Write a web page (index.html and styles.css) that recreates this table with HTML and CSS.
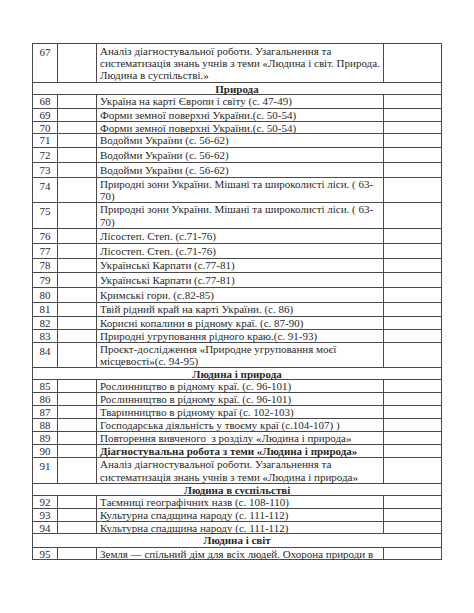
FILE: index.html
```html
<!DOCTYPE html>
<html lang="uk">
<head>
<meta charset="utf-8">
<title>Таблиця</title>
<link rel="stylesheet" href="styles.css">
</head>
<body>
<div class="tbl">
  <div class="row h38 multi"><div class="c n">67</div><div class="c e"></div><div class="c t">Аналіз діагностувальної роботи. Узагальнення та систематизація знань учнів з теми «Людина і світ. Природа. Людина в суспільстві.»</div><div class="c e"></div></div>
  <div class="row hdr h12"><div class="c h">Природа</div></div>
  <div class="row h14"><div class="c n">68</div><div class="c e"></div><div class="c t">Україна на карті Європи і світу (с. 47-49)</div><div class="c e"></div></div>
  <div class="row h13"><div class="c n">69</div><div class="c e"></div><div class="c t">Форми земної поверхні України.(с. 50-54)</div><div class="c e"></div></div>
  <div class="row h12"><div class="c n">70</div><div class="c e"></div><div class="c t">Форми земної поверхні України.(с. 50-54)</div><div class="c e"></div></div>
  <div class="row h14"><div class="c n">71</div><div class="c e"></div><div class="c t">Водойми України (с. 56-62)</div><div class="c e"></div></div>
  <div class="row h15"><div class="c n">72</div><div class="c e"></div><div class="c t">Водойми України (с. 56-62)</div><div class="c e"></div></div>
  <div class="row h15"><div class="c n">73</div><div class="c e"></div><div class="c t">Водойми України (с. 56-62)</div><div class="c e"></div></div>
  <div class="row h25 multi"><div class="c n">74</div><div class="c e"></div><div class="c t">Природні зони України. Мішані та широколисті ліси. ( 63-70)</div><div class="c e"></div></div>
  <div class="row h26 multi"><div class="c n">75</div><div class="c e"></div><div class="c t">Природні зони України. Мішані та широколисті ліси. ( 63-70)</div><div class="c e"></div></div>
  <div class="row h15"><div class="c n">76</div><div class="c e"></div><div class="c t">Лісостеп. Степ. (с.71-76)</div><div class="c e"></div></div>
  <div class="row h15"><div class="c n">77</div><div class="c e"></div><div class="c t">Лісостеп. Степ. (с.71-76)</div><div class="c e"></div></div>
  <div class="row h14"><div class="c n">78</div><div class="c e"></div><div class="c t">Українські Карпати (с.77-81)</div><div class="c e"></div></div>
  <div class="row h15"><div class="c n">79</div><div class="c e"></div><div class="c t">Українські Карпати (с.77-81)</div><div class="c e"></div></div>
  <div class="row h15"><div class="c n">80</div><div class="c e"></div><div class="c t">Кримські гори. (с.82-85)</div><div class="c e"></div></div>
  <div class="row h14"><div class="c n">81</div><div class="c e"></div><div class="c t">Твій рідний край на карті України. (с. 86)</div><div class="c e"></div></div>
  <div class="row h13"><div class="c n">82</div><div class="c e"></div><div class="c t">Корисні копалини в рідному краї. (с. 87-90)</div><div class="c e"></div></div>
  <div class="row h13"><div class="c n">83</div><div class="c e"></div><div class="c t">Природні угруповання рідного краю.(с. 91-93)</div><div class="c e"></div></div>
  <div class="row h25 multi"><div class="c n">84</div><div class="c e"></div><div class="c t">Проєкт-дослідження «Природне угруповання моєї місцевості»(с. 94-95)</div><div class="c e"></div></div>
  <div class="row hdr h12"><div class="c h">Людина і природа</div></div>
  <div class="row h13"><div class="c n">85</div><div class="c e"></div><div class="c t">Рослинництво в рідному краї. (с. 96-101)</div><div class="c e"></div></div>
  <div class="row h13"><div class="c n">86</div><div class="c e"></div><div class="c t">Рослинництво в рідному краї. (с. 96-101)</div><div class="c e"></div></div>
  <div class="row h13"><div class="c n">87</div><div class="c e"></div><div class="c t">Тваринництво в рідному краї (с. 102-103)</div><div class="c e"></div></div>
  <div class="row h13"><div class="c n">88</div><div class="c e"></div><div class="c t">Господарська діяльність у твоєму краї (с.104-107) )</div><div class="c e"></div></div>
  <div class="row h13"><div class="c n">89</div><div class="c e"></div><div class="c t">Повторення вивченого &nbsp;з розділу «Людина і природа»</div><div class="c e"></div></div>
  <div class="row h13"><div class="c n">90</div><div class="c e"></div><div class="c t b">Діагностувальна робота з теми «Людина і природа»</div><div class="c e"></div></div>
  <div class="row h26 multi"><div class="c n">91</div><div class="c e"></div><div class="c t">Аналіз діагностувальної роботи. Узагальнення та систематизація знань учнів з теми «Людина і природа»</div><div class="c e"></div></div>
  <div class="row hdr h12"><div class="c h">Людина в суспільстві</div></div>
  <div class="row h13"><div class="c n">92</div><div class="c e"></div><div class="c t">Таємниці географічних назв (с. 108-110)</div><div class="c e"></div></div>
  <div class="row h13"><div class="c n">93</div><div class="c e"></div><div class="c t">Культурна спадщина народу (с. 111-112)</div><div class="c e"></div></div>
  <div class="row h12"><div class="c n">94</div><div class="c e"></div><div class="c t">Культурна спадщина народу (с. 111-112)</div><div class="c e"></div></div>
  <div class="row hdr h14"><div class="c h">Людина і світ</div></div>
  <div class="row h12"><div class="c n">95</div><div class="c e"></div><div class="c t">Земля — спільний дім для всіх людей. Охорона природи в</div><div class="c e"></div></div>
</div>
</body>
</html>
```

FILE: styles.css
```css
html, body {
  margin: 0;
  padding: 0;
  background: #ffffff;
}
body {
  font-family: "Liberation Serif", "Times New Roman", serif;
  font-size: 11px;
  color: #2a2a2a;
}
.tbl {
  box-sizing: border-box;
  width: 410px;
  margin: 43px 0 0 32px;
  border: 1px solid #4a4a4a;
}
.row {
  box-sizing: border-box;
  display: grid;
  grid-template-columns: 24px 39px 287px 58px;
  border-top: 1px solid #4a4a4a;
  overflow: visible;
}
.row:first-child {
  border-top: none;
}
.row.hdr {
  grid-template-columns: 1fr;
}
.h12 { height: 12px; }
.h13 { height: 13px; }
.h14 { height: 14px; }
.h15 { height: 15px; }
.h25 { height: 25px; }
.h26 { height: 26px; }
.h38 { height: 38px; }
.c {
  box-sizing: border-box;
  display: flex;
  align-items: center;
  line-height: 12.3px;
  min-width: 0;
}
.c + .c {
  border-left: 1px solid #4a4a4a;
}
.n {
  justify-content: center;
}
.multi .n {
  align-items: flex-start;
  padding-top: 2px;
}
.t {
  padding-left: 3px;
  padding-right: 2px;
}
.b, .h {
  font-weight: bold;
}
.h {
  justify-content: center;
}
```
